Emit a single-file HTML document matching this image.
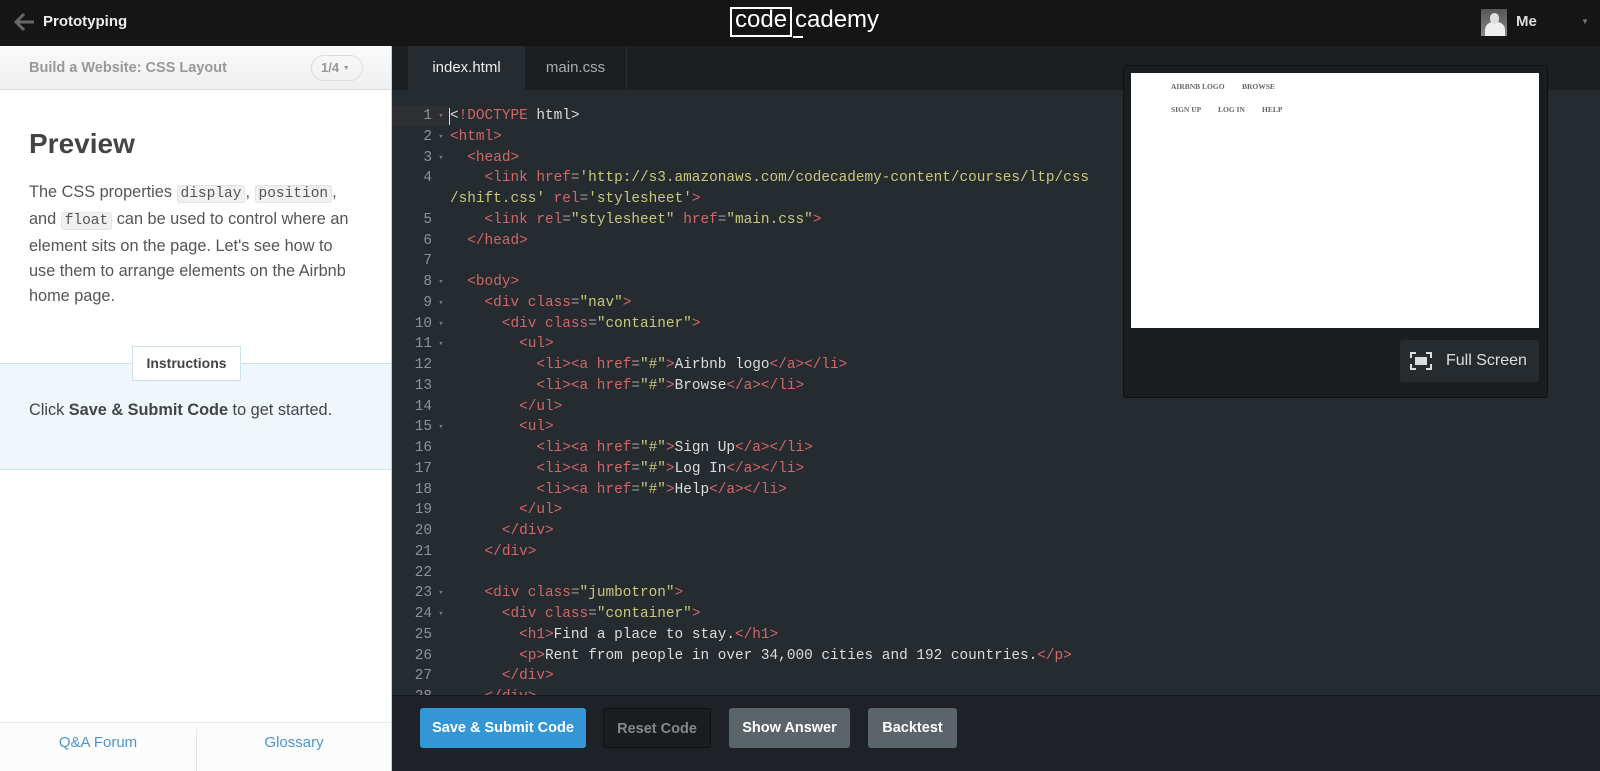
<!DOCTYPE html>
<html><head><meta charset="utf-8"><style>
*{margin:0;padding:0;box-sizing:border-box}
html,body{width:1600px;height:771px;overflow:hidden}
body{position:relative;font-family:"Liberation Sans",sans-serif;background:#262b30}
.abs{position:absolute}
#top{left:0;top:0;width:1600px;height:46px;background:#151515}
#left{left:0;top:46px;width:392px;height:725px;background:#fff;border-right:1px solid #ccc}
.code{position:absolute;left:0;top:106px;font-family:"Liberation Mono",monospace;font-size:14.4px;line-height:20.75px;color:#dcdcdc;width:1100px;height:589px;overflow:hidden}
.row{height:20.75px;position:relative;white-space:pre}
.n{display:inline-block;width:432px;text-align:right;color:#8d9296}
.f{display:inline-block;width:18px;color:#777;font-size:9px;text-align:center;vertical-align:top}
.t{color:#d0676a}.s{color:#c8c87a}.e{color:#999}
.btn{position:absolute;top:708px;height:40px;border-radius:3px;font-weight:bold;font-size:14.5px;color:#fff;text-align:center;line-height:40px}
code{background:#f0f0f0;border:1px solid #e4e4e4;border-radius:3px;font-family:'Liberation Mono',monospace;font-size:14.5px;padding:0 3px}
</style></head><body>
<div id="top" class="abs">
 <svg class="abs" style="left:14px;top:12px" width="22" height="20" viewBox="0 0 22 20"><path d="M10 2 L2 10 L10 18 M2 10 H20" stroke="#666" stroke-width="3" fill="none"/></svg>
 <div class="abs" style="left:43px;top:13px;color:#eee;font-weight:bold;font-size:15px">Prototyping</div>
 <div class="abs" style="left:730px;top:7px;width:62px;height:30px;border:2px solid #fff"></div>
 <div class="abs" style="left:735px;top:6px;color:#fff;font-size:24px">code</div>
 <div class="abs" style="left:795px;top:6px;color:#fff;font-size:24px">cademy</div>
 <div class="abs" style="left:793px;top:36px;width:10px;height:2px;background:#fff"></div>
 <div class="abs" style="left:1481px;top:9px;width:26px;height:27px;background:linear-gradient(#555,#888)"><div class="abs" style="left:4px;top:13px;width:20px;height:14px;background:#eee;border-radius:8px 8px 0 0"></div><div class="abs" style="left:9px;top:4px;width:9px;height:11px;background:#ddd;border-radius:5px"></div></div>
 <div class="abs" style="left:1516px;top:13px;color:#ddd;font-weight:bold;font-size:15px">Me</div>
 <div class="abs" style="left:1581px;top:17px;color:#777;font-size:8px">▼</div>
</div>
<div id="left" class="abs">
 <div class="abs" style="left:0;top:0;width:391px;height:44px;background:linear-gradient(#fafafa,#efefef);border-bottom:1px solid #ddd"></div>
 <div class="abs" style="left:29px;top:14px;color:#999;font-weight:bold;font-size:14.5px">Build a Website: CSS Layout</div>
 <div class="abs" style="left:311px;top:9px;width:52px;height:26px;border:1px solid #ddd;border-radius:13px;color:#999;font-size:13px;font-weight:bold;line-height:24px;padding-left:9px">1/4 <span style="font-size:7px;vertical-align:2px">▼</span></div>
 <div class="abs" style="left:29px;top:82px;font-size:28px;font-weight:bold;color:#444">Preview</div>
 <div class="abs" style="left:29px;top:134px;width:328px;font-size:16.3px;line-height:25px;color:#555">The CSS properties <code>display</code>, <code>position</code>, and <code>float</code> can be used to control where an element sits on the page. Let's see how to use them to arrange elements on the Airbnb home page.</div>
 <div class="abs" style="left:0;top:317px;width:391px;height:107px;background:#eff7fd;border-top:1px solid #cfe2ef;border-bottom:1px solid #cfe2ef"></div>
 <div class="abs" style="left:132px;top:300px;width:109px;height:35px;background:#fff;border:1px solid #cfe2ef;text-align:center;line-height:33px;font-size:14px;font-weight:bold;color:#444">Instructions</div>
 <div class="abs" style="left:29px;top:355px;font-size:16.3px;color:#444">Click <b>Save &amp; Submit Code</b> to get started.</div>
 <div class="abs" style="left:0;top:676px;width:391px;height:49px;border-top:1px solid #e6e6e6;background:#fcfcfc"></div>
 <div class="abs" style="left:196px;top:683px;width:1px;height:42px;background:#e6e6e6"></div>
 <div class="abs" style="left:0;top:688px;width:196px;text-align:center;color:#4a97cf;font-size:15px">Q&amp;A Forum</div>
 <div class="abs" style="left:196px;top:688px;width:196px;text-align:center;color:#4a97cf;font-size:15px">Glossary</div>
</div>
<div class="abs" style="left:392px;top:46px;width:1208px;height:44px;background:#1c1f22"></div>
<div class="abs" style="left:408px;top:46px;width:117px;height:44px;background:#262b30;color:#eee;font-size:15px;text-align:center;line-height:44px">index.html</div>
<div class="abs" style="left:525px;top:46px;width:102px;height:44px;border-right:1px solid #2c3035;color:#aaa;font-size:15px;text-align:center;line-height:44px">main.css</div>
<div class="abs" style="left:392px;top:106px;width:56px;height:21px;background:#2e2f33"></div>
<div class="code"><div class="row"><span class="n">1</span><span class="f">▾</span>&lt;<span class="t">!DOCTYPE</span> html&gt;</div><div class="row"><span class="n">2</span><span class="f">▾</span><span class="t">&lt;html&gt;</span></div><div class="row"><span class="n">3</span><span class="f">▾</span>  <span class="t">&lt;head&gt;</span></div><div class="row"><span class="n">4</span><span class="f"> </span>    <span class="t">&lt;link href</span><span class="e">=</span><span class="s">'http://s3.amazonaws.com/codecademy-content/courses/ltp/css</span></div><div class="row"><span class="n"></span><span class="f"> </span><span class="s">/shift.css'</span> <span class="t">rel</span><span class="e">=</span><span class="s">'stylesheet'</span><span class="t">&gt;</span></div><div class="row"><span class="n">5</span><span class="f"> </span>    <span class="t">&lt;link rel</span><span class="e">=</span><span class="s">"stylesheet"</span> <span class="t">href</span><span class="e">=</span><span class="s">"main.css"</span><span class="t">&gt;</span></div><div class="row"><span class="n">6</span><span class="f"> </span>  <span class="t">&lt;/head&gt;</span></div><div class="row"><span class="n">7</span><span class="f"> </span></div><div class="row"><span class="n">8</span><span class="f">▾</span>  <span class="t">&lt;body&gt;</span></div><div class="row"><span class="n">9</span><span class="f">▾</span>    <span class="t">&lt;div class</span><span class="e">=</span><span class="s">"nav"</span><span class="t">&gt;</span></div><div class="row"><span class="n">10</span><span class="f">▾</span>      <span class="t">&lt;div class</span><span class="e">=</span><span class="s">"container"</span><span class="t">&gt;</span></div><div class="row"><span class="n">11</span><span class="f">▾</span>        <span class="t">&lt;ul&gt;</span></div><div class="row"><span class="n">12</span><span class="f"> </span>          <span class="t">&lt;li&gt;&lt;a href</span><span class="e">=</span><span class="s">"#"</span><span class="t">&gt;</span>Airbnb logo<span class="t">&lt;/a&gt;&lt;/li&gt;</span></div><div class="row"><span class="n">13</span><span class="f"> </span>          <span class="t">&lt;li&gt;&lt;a href</span><span class="e">=</span><span class="s">"#"</span><span class="t">&gt;</span>Browse<span class="t">&lt;/a&gt;&lt;/li&gt;</span></div><div class="row"><span class="n">14</span><span class="f"> </span>        <span class="t">&lt;/ul&gt;</span></div><div class="row"><span class="n">15</span><span class="f">▾</span>        <span class="t">&lt;ul&gt;</span></div><div class="row"><span class="n">16</span><span class="f"> </span>          <span class="t">&lt;li&gt;&lt;a href</span><span class="e">=</span><span class="s">"#"</span><span class="t">&gt;</span>Sign Up<span class="t">&lt;/a&gt;&lt;/li&gt;</span></div><div class="row"><span class="n">17</span><span class="f"> </span>          <span class="t">&lt;li&gt;&lt;a href</span><span class="e">=</span><span class="s">"#"</span><span class="t">&gt;</span>Log In<span class="t">&lt;/a&gt;&lt;/li&gt;</span></div><div class="row"><span class="n">18</span><span class="f"> </span>          <span class="t">&lt;li&gt;&lt;a href</span><span class="e">=</span><span class="s">"#"</span><span class="t">&gt;</span>Help<span class="t">&lt;/a&gt;&lt;/li&gt;</span></div><div class="row"><span class="n">19</span><span class="f"> </span>        <span class="t">&lt;/ul&gt;</span></div><div class="row"><span class="n">20</span><span class="f"> </span>      <span class="t">&lt;/div&gt;</span></div><div class="row"><span class="n">21</span><span class="f"> </span>    <span class="t">&lt;/div&gt;</span></div><div class="row"><span class="n">22</span><span class="f"> </span></div><div class="row"><span class="n">23</span><span class="f">▾</span>    <span class="t">&lt;div class</span><span class="e">=</span><span class="s">"jumbotron"</span><span class="t">&gt;</span></div><div class="row"><span class="n">24</span><span class="f">▾</span>      <span class="t">&lt;div class</span><span class="e">=</span><span class="s">"container"</span><span class="t">&gt;</span></div><div class="row"><span class="n">25</span><span class="f"> </span>        <span class="t">&lt;h1&gt;</span>Find a place to stay.<span class="t">&lt;/h1&gt;</span></div><div class="row"><span class="n">26</span><span class="f"> </span>        <span class="t">&lt;p&gt;</span>Rent from people in over 34,000 cities and 192 countries.<span class="t">&lt;/p&gt;</span></div><div class="row"><span class="n">27</span><span class="f"> </span>      <span class="t">&lt;/div&gt;</span></div><div class="row"><span class="n">28</span><span class="f"> </span>    <span class="t">&lt;/div&gt;</span></div></div>
<div class="abs" style="left:449px;top:108px;width:1px;height:17px;background:#ddd"></div>
<div class="abs" style="left:1123px;top:65px;width:425px;height:333px;background:#1a1d20;border:1px solid #111;border-radius:3px"></div>
<div class="abs" style="left:1131px;top:73px;width:408px;height:255px;background:#fff;font-family:'Liberation Serif',serif;font-size:7.5px;font-weight:bold;color:#666;text-decoration:underline">
 <span class="abs" style="left:40px;top:9px">AIRBNB LOGO</span><span class="abs" style="left:111px;top:9px">BROWSE</span>
 <span class="abs" style="left:40px;top:32px">SIGN UP</span><span class="abs" style="left:87px;top:32px">LOG IN</span><span class="abs" style="left:131px;top:32px">HELP</span>
</div>
<div class="abs" style="left:1400px;top:340px;width:139px;height:42px;background:#262b30;border-radius:3px;color:#ddd;font-size:16px;line-height:42px;padding-left:46px">Full Screen</div>
<svg class="abs" style="left:1410px;top:352px" width="22" height="18" viewBox="0 0 22 18"><path d="M1 6V1h5M16 1h5v5M21 12v5h-5M6 17H1v-5" stroke="#ddd" stroke-width="2" fill="none"/><rect x="5" y="5" width="12" height="8" fill="#ddd"/></svg>
<div class="abs" style="left:392px;top:695px;width:1208px;height:76px;background:#1e2226;border-top:1px solid #15181a"></div>
<div class="btn" style="left:420px;width:166px;background:#3596d6">Save &amp; Submit Code</div>
<div class="btn" style="left:603px;width:108px;background:#1a1d20;border:1px solid #111;color:#888">Reset Code</div>
<div class="btn" style="left:729px;width:121px;background:#5b646b">Show Answer</div>
<div class="btn" style="left:868px;width:89px;background:#5b646b">Backtest</div>
</body></html>
